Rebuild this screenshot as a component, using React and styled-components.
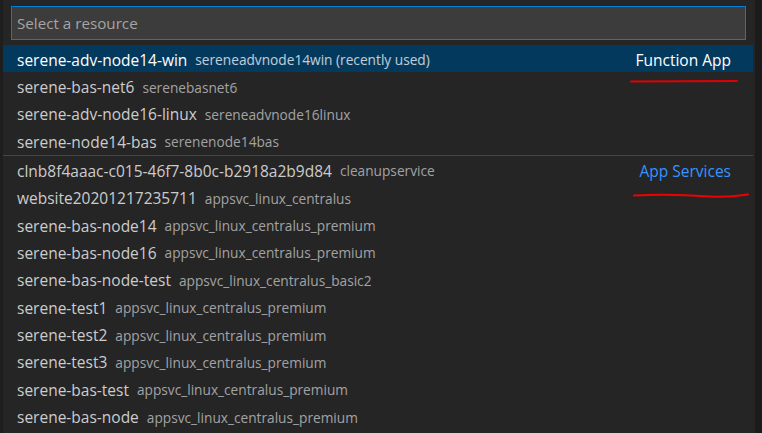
import React from 'react';
import styled, { createGlobalStyle } from 'styled-components';

const functionApps = [
  { name: 'serene-adv-node14-win', detail: 'sereneadvnode14win (recently used)', selected: true },
  { name: 'serene-bas-net6', detail: 'serenebasnet6' },
  { name: 'serene-adv-node16-linux', detail: 'sereneadvnode16linux' },
  { name: 'serene-node14-bas', detail: 'serenenode14bas' },
];

const appServices = [
  { name: 'clnb8f4aaac-c015-46f7-8b0c-b2918a2b9d84', detail: 'cleanupservice' },
  { name: 'website20201217235711', detail: 'appsvc_linux_centralus' },
  { name: 'serene-bas-node14', detail: 'appsvc_linux_centralus_premium' },
  { name: 'serene-bas-node16', detail: 'appsvc_linux_centralus_premium' },
  { name: 'serene-bas-node-test', detail: 'appsvc_linux_centralus_basic2' },
  { name: 'serene-test1', detail: 'appsvc_linux_centralus_premium' },
  { name: 'serene-test2', detail: 'appsvc_linux_centralus_premium' },
  { name: 'serene-test3', detail: 'appsvc_linux_centralus_premium' },
  { name: 'serene-bas-test', detail: 'appsvc_linux_centralus_premium' },
  { name: 'serene-bas-node', detail: 'appsvc_linux_centralus_premium' },
];

export default function App() {
  return (
    <>
      <GlobalStyle />
      <Screen>
        <Panel>
          <InputWrap>
            <Input placeholder="Select a resource" />
          </InputWrap>
          <List>
            {functionApps.map((item, i) => (
              <Row key={item.name} selected={item.selected}>
                <Label>{item.name}</Label>
                <Detail>{item.detail}</Detail>
                {i === 0 && <GroupName>Function App</GroupName>}
              </Row>
            ))}
            {appServices.map((item, i) => (
              <Row key={item.name} separator={i === 0}>
                <Label>{item.name}</Label>
                <Detail>{item.detail}</Detail>
                {i === 0 && <GroupName link>App Services</GroupName>}
              </Row>
            ))}
          </List>
          <Marks width="762" height="433" viewBox="0 0 762 433">
            <path d="M631 81.5 L737 81" stroke="#e00000" strokeWidth="2.2" strokeLinecap="round" fill="none" />
            <path
              d="M634 195.5 C660 194 690 195 710 196.5 C725 197.5 738 196 748 194.5"
              stroke="#f00000"
              strokeWidth="2"
              strokeLinecap="round"
              fill="none"
            />
          </Marks>
        </Panel>
        <Edge />
      </Screen>
    </>
  );
}

/******************** styled components ************************/

const GlobalStyle = createGlobalStyle`
  html, body {
    margin: 0;
    padding: 0;
    background: #1e1e1e;
    overflow: hidden;
  }
  * {
    box-sizing: border-box;
  }
`;

const Screen = styled.div`
  display: flex;
  width: 762px;
  height: 433px;
  padding-left: 3px;
  background: #1e1e1e;
  font-family: 'Open Sans', 'Noto Sans', sans-serif;
`;

const Panel = styled.div`
  position: relative;
  width: 752px;
  height: 433px;
  background: #252526;
  overflow: hidden;
`;

const Edge = styled.div`
  flex: 1;
  background: #1b1b1c;
`;

const InputWrap = styled.div`
  padding: 6px 9px 5px 8px;
`;

const Input = styled.input`
  display: block;
  width: 100%;
  height: 34px;
  padding: 0 5px;
  border: 1px solid #007fd4;
  background: #3c3c3c;
  color: #cccccc;
  font-family: inherit;
  font-size: 15.2px;
  outline: none;
  &::placeholder {
    color: #a5a5a5;
  }
`;

const List = styled.div`
  width: 750px;
`;

const Row = styled.div`
  display: flex;
  align-items: center;
  gap: 8px;
  height: ${(p) => (p.separator ? '28.9px' : '27.4px')};
  padding: 2px 22px 0 14px;
  border-top: ${(p) => (p.separator ? '1px solid #454545' : 'none')};
  background: ${(p) => (p.selected ? '#04395e' : 'transparent')};
  color: ${(p) => (p.selected ? '#ffffff' : '#cccccc')};
`;

const Label = styled.span`
  font-size: 15.5px;
  white-space: nowrap;
`;

const Detail = styled.span`
  font-size: 13.7px;
  opacity: 0.75;
  white-space: nowrap;
`;

const GroupName = styled.span`
  margin-left: auto;
  font-size: 15.5px;
  color: ${(p) => (p.link ? '#3794ff' : '#ffffff')};
`;

const Marks = styled.svg`
  position: absolute;
  left: -3px;
  top: 0;
  pointer-events: none;
`;
